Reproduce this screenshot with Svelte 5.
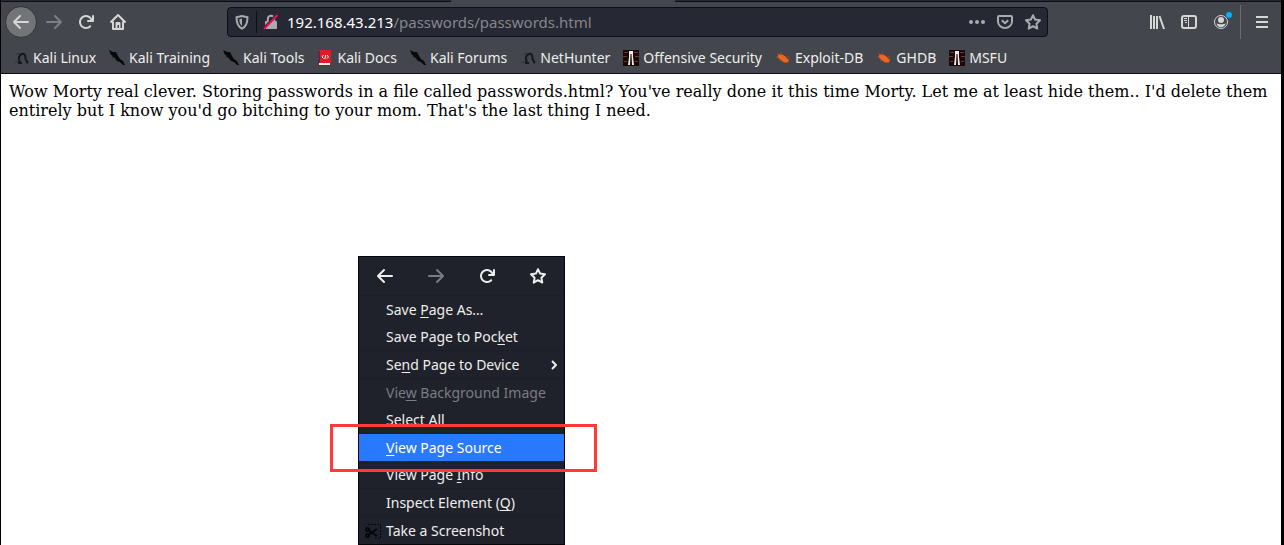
<script lang="ts">
  type Icon = 'dragon' | 'claw' | 'docs' | 'msf' | 'bug'

  const bookmarks: { icon: Icon; label: string }[] = [
    { icon: 'dragon', label: 'Kali Linux' },
    { icon: 'claw', label: 'Kali Training' },
    { icon: 'claw', label: 'Kali Tools' },
    { icon: 'docs', label: 'Kali Docs' },
    { icon: 'claw', label: 'Kali Forums' },
    { icon: 'dragon', label: 'NetHunter' },
    { icon: 'msf', label: 'Offensive Security' },
    { icon: 'bug', label: 'Exploit-DB' },
    { icon: 'bug', label: 'GHDB' },
    { icon: 'msf', label: 'MSFU' },
  ]

  // label is split around its access key
  const groups = [
    [
      { label: ['Save ', 'P', 'age As…'] },
      { label: ['Save Page to Poc', 'k', 'et'] },
    ],
    [{ label: ['Se', 'n', 'd Page to Device'], submenu: true }],
    [
      { label: ['Vie', 'w', ' Background Image'], disabled: true },
      { label: ['Select All', '', ''] },
    ],
    [
      { label: ['', 'V', 'iew Page Source'], active: true },
      { label: ['View Page ', 'I', 'nfo'] },
    ],
    [{ label: ['Inspect Element (', 'Q', ')'] }],
    [{ label: ['Take a Screenshot', '', ''], screenshot: true }],
  ] as {
    label: string[]
    submenu?: boolean
    disabled?: boolean
    active?: boolean
    screenshot?: boolean
  }[][]
</script>

{#snippet back()}
  <svg viewBox="0 0 16 16"><path d="M15 7H3.414l4.293-4.293a1 1 0 0 0-1.414-1.414l-6 6a1 1 0 0 0 0 1.414l6 6a1 1 0 0 0 1.414-1.414L3.414 9H15a1 1 0 0 0 0-2z" /></svg>
{/snippet}

{#snippet forward()}
  <svg viewBox="0 0 16 16"><path d="M1 7h11.586L8.293 2.707a1 1 0 0 1 1.414-1.414l6 6a1 1 0 0 1 0 1.414l-6 6a1 1 0 0 1-1.414-1.414L12.586 9H1a1 1 0 0 1 0-2z" /></svg>
{/snippet}

{#snippet reload()}
  <svg viewBox="0 0 16 16"><path d="M15 1a1 1 0 0 0-1 1v2.418A6.995 6.995 0 1 0 8 15a6.954 6.954 0 0 0 4.95-2.05 1 1 0 0 0-1.414-1.414A5.019 5.019 0 1 1 12.549 6H10a1 1 0 0 0 0 2h5a1 1 0 0 0 1-1V2a1 1 0 0 0-1-1z" /></svg>
{/snippet}

{#snippet star()}
  <svg viewBox="0 0 16 16"><path class="line" d="M8 1.200l2.100 4.400 4.900.7-3.600 3.400.9 4.900L8 12.200l-4.300 2.400.9-4.900L1 6.300l4.900-.7z" /></svg>
{/snippet}

<div class="window">
  <div class="tabs"><div class="tab"></div></div>

  <nav class="toolbar">
    <button class="tool round" aria-label="Back">{@render back()}</button>
    <button class="tool" aria-label="Forward" disabled>{@render forward()}</button>
    <button class="tool" aria-label="Reload">{@render reload()}</button>
    <button class="tool" aria-label="Home">
      <svg viewBox="0 0 16 16">
        <path class="line" d="M.5 8.500L8 1l7.500 7.500M3 7.500V15h10V7.500" />
        <path d="M5.500 15V9a1 1 0 0 1 1-1h3a1 1 0 0 1 1 1v6H9v-4H7.500v4z" />
      </svg>
    </button>

    <div class="urlbar">
      <button class="tracking" aria-label="Tracking protection">
        <svg viewBox="0 0 16 16">
          <path class="line" d="M8 2L2.500 3.200c0 5.200.8 9.100 5.500 11.500 4.700-2.400 5.500-6.300 5.500-11.500z" />
          <path d="M8 4.500l-2.700.8c.1 3 .5 5 2.700 6.700z" />
        </svg>
      </button>
      <button class="security" aria-label="Connection is not secure">
        <svg viewBox="0 0 16 16">
          <path d="M3 7h10a1 1 0 0 1 1 1v6a1 1 0 0 1-1 1H3a1 1 0 0 1-1-1V8a1 1 0 0 1 1-1z" />
          <path class="line" d="M4.800 8V5a3.200 3.200 0 0 1 6.400 0v3" />
          <path class="strike-gap" d="M0 15L13 1" />
          <path class="strike" d="M1 15L14.500 1" />
        </svg>
      </button>
      <div class="address"><span class="host">192.168.43.213</span>/passwords/passwords.html</div>
      <button aria-label="Page actions">
        <svg viewBox="0 0 16 16"><circle cx="2" cy="8" r="2" /><circle cx="8" cy="8" r="2" /><circle cx="14" cy="8" r="2" /></svg>
      </button>
      <button aria-label="Save to Pocket">
        <svg viewBox="0 0 16 16">
          <path class="line" d="M2 2h12a1 1 0 0 1 1 1v4.500a7 6.500 0 0 1-14 0V3a1 1 0 0 1 1-1z" />
          <path class="line" d="M4.800 6.200L8 9.300l3.200-3.100" />
        </svg>
      </button>
      <button aria-label="Bookmark this page">{@render star()}</button>
    </div>

    <button class="tool" aria-label="Library">
      <svg viewBox="0 0 16 16"><path class="line" d="M2 1v14M5 2v13M8 2v13M10.500 2L15 15" /></svg>
    </button>
    <button class="tool" aria-label="Sidebars">
      <svg viewBox="0 0 16 16">
        <rect class="line" x="1" y="2" width="14" height="12" rx="2" />
        <path d="M7 2h1v12H7zM3 4h3v1H3zM3 6h3v1H3zM4 8h2v1H4z" />
      </svg>
    </button>
    <button class="tool account" aria-label="Account">
      <svg viewBox="0 0 16 16">
        <circle class="thin" cx="8" cy="8" r="6.500" />
        <circle cx="8" cy="6" r="3" />
        <path d="M3.500 9.500c2 1 7 1 9 0C12 12 10 13.200 8 13.200S4 12 3.500 9.500z" />
      </svg>
      <span class="badge"></span>
    </button>
    <button class="tool menu-button" aria-label="Open menu">
      <svg viewBox="0 0 16 16"><path d="M2 2h12v2H2zM2 7h12v2H2zM2 12h12v2H2z" /></svg>
    </button>
  </nav>

  <div class="bookmarks">
    {#each bookmarks as { icon, label }}
      <a href="#{label}">
        <svg viewBox="0 0 16 16">
          {#if icon === 'dragon'}
            <path class="faint" d="M1 13c3-2 4-1 5-2M3 5c2-2 4-2 5-1" />
            <path class="dark" d="M6 13c2-2-1-4 0-6s3-4 5-3 1 4 2 6 1 2 2 3M5 13h4" />
          {:else if icon === 'claw'}
            <path class="dark-fill" d="M0 0l4 2 3 0 2 4 2 3 3 2 2 4-2 0-3-3-3-1-3-4-1 1-1-3-1 0z" />
          {:else if icon === 'docs'}
            <path fill="#183e88" d="M1 1h2v13H1z" />
            <path fill="#e01b24" d="M2 0h12v13H2z" />
            <path fill="#eee" d="M2 13h11v2H2z" />
            <path fill="#a80e18" d="M2 1h1v12H2zM1 15h12v1H1z" />
            <path class="code" d="M6.500 5L5 7l1.500 1.500M10 5l1.500 2L10 8.500M8.700 5L7.800 9" />
          {:else if icon === 'msf'}
            <path fill="#1a0809" d="M0 0h16v16H0z" />
            <path fill="#65383a" d="M1 2h4v1H1zM11 2h4v1h-4zM0 6h4v1H0zM12 6h4v1h-4zM1 11h3v1H1zM12 11h3v1h-3z" />
            <path fill="#f0ebe5" d="M6 1h4v6l1 8H9L8.500 4h-1L7 15H5l1-8z" />
          {:else}
            <path class="legs" d="M2 3l4 3M6 2l2 4M1 7h5M12 6l2 1M11 9h4M4 11l3-2M10 11l3 2" />
            <path fill="#f0651a" d="M3 5c3-1 6 0 8 2l3 4c-2 2-5 2-7 0S2 8 3 5z" />
          {/if}
        </svg>
        {label}
      </a>
    {/each}
  </div>

  <main>
    Wow Morty real clever. Storing passwords in a file called passwords.html? You've really done it this time Morty. Let me at least hide them.. I'd delete them entirely but I know you'd go bitching to your mom. That's the last thing I need.
  </main>

  <div class="context-menu">
    <div class="quick">
      <button aria-label="Back">{@render back()}</button>
      <button aria-label="Forward" disabled>{@render forward()}</button>
      <button aria-label="Reload">{@render reload()}</button>
      <button aria-label="Bookmark">{@render star()}</button>
    </div>
    {#each groups as items}
      <div class="group">
        {#each items as item}
          <button class="item" class:active={item.active} disabled={item.disabled}>
            <span class="gutter">
              {#if item.screenshot}
                <svg class="scissors" viewBox="0 0 16 16">
                  <path class="dash" d="M3 1.500h12.500V15H10" />
                  <circle cx="2.500" cy="6.500" r="1.500" />
                  <circle cx="2.500" cy="12.500" r="1.500" />
                  <path d="M4 7.500l8 5.500M4 11.500L12 6" />
                </svg>
              {/if}
            </span>
            <span class="label">{item.label[0]}<u>{item.label[1]}</u>{item.label[2]}</span>
            {#if item.submenu}
              <svg class="chevron" viewBox="0 0 8 8"><path class="line" d="M2 0l4 4-4 4" /></svg>
            {/if}
            {#if item.active}<span class="marker"></span>{/if}
          </button>
        {/each}
      </div>
    {/each}
  </div>
</div>

<style>
  .window {
    box-sizing: border-box;
    position: relative;
    display: flex;
    flex-direction: column;
    min-height: 100vh;
    border-left: 1px solid #000;
    border-right: 3px solid #000;
    background: #fff;
    overflow: hidden;
    font: 14px "Noto Sans", sans-serif;
    color: #eeeeec;
  }

  button {
    display: flex;
    align-items: center;
    justify-content: center;
    margin: 0;
    padding: 0;
    border: 0;
    background: none;
    color: inherit;
    font: inherit;
  }

  svg {
    width: 16px;
    height: 16px;
    flex-shrink: 0;
    fill: currentColor;
    overflow: visible;
  }

  .line {
    fill: none;
    stroke: currentColor;
    stroke-width: 2;
    stroke-linejoin: round;
  }

  .thin {
    fill: none;
    stroke: currentColor;
  }

  .tabs {
    height: 1px;
    background: #262835;
    border-bottom: 1px solid #0d0e12;
  }

  .tab {
    width: 224px;
    height: 2px;
    margin-left: 450px;
    background: #43464d;
  }

  .toolbar {
    display: flex;
    align-items: center;
    height: 40px;
    padding: 0 5px 0 4px;
    background: #43464d;
    color: #d6d6d3;
  }

  .tool {
    width: 32px;
    height: 32px;
  }

  .tool:disabled {
    color: #7d7f83;
  }

  .round {
    box-sizing: border-box;
    margin-right: 1px;
    border: 1px solid #303238;
    border-radius: 50%;
    background: #737477;
  }

  .urlbar {
    box-sizing: border-box;
    display: flex;
    flex: 1;
    align-items: center;
    gap: 12px;
    height: 30px;
    margin: 0 93px;
    padding: 0 6px;
    border: 1px solid #0d0e12;
    border-radius: 4px;
    background: #262833;
    color: #a9aaad;
  }

  .tracking {
    height: 22px;
    padding-right: 6px;
    border-right: 1px solid #0d0e12;
  }

  .security {
    margin-left: -6px;
  }

  .strike-gap {
    stroke: #262833;
    stroke-width: 2;
  }

  .strike {
    stroke: #e2124a;
    stroke-width: 2;
  }

  .address {
    flex: 1;
    margin-left: -4px;
    color: #85868c;
    font-size: 15px;
    white-space: nowrap;
  }

  .host {
    color: #fff;
  }

  .account {
    position: relative;
  }

  .badge {
    position: absolute;
    top: 6px;
    right: 5px;
    width: 6px;
    height: 6px;
    border-radius: 50%;
    background: #00b0ff;
  }

  .menu-button {
    width: 42px;
    height: 34px;
    margin-left: 3px;
    margin-right: -6px;
    border-left: 1px solid #6c6d70;
  }

  .bookmarks {
    display: flex;
    align-items: center;
    gap: 13px;
    height: 31px;
    padding: 0 12px;
    border-bottom: 1px solid #0d0e12;
    background: #43464d;
  }

  .bookmarks a {
    display: flex;
    align-items: center;
    gap: 4px;
    color: inherit;
    text-decoration: none;
    white-space: nowrap;
  }

  .dark {
    fill: none;
    stroke: #17181b;
    stroke-width: 2;
  }

  .faint {
    fill: none;
    stroke: #303238;
  }

  .dark-fill {
    fill: #08090a;
  }

  .code {
    fill: none;
    stroke: #fff;
  }

  .legs {
    fill: none;
    stroke: #8a5238;
  }

  main {
    flex: 1;
    padding: 8px;
    color: #000;
    font: 16px/19px "DejaVu Serif", serif;
  }

  .context-menu {
    position: absolute;
    top: 256px;
    left: 357px;
    width: 205px;
    border: 1px solid #06070b;
    background: #20222b;
  }

  .quick {
    display: flex;
    height: 38px;
  }

  .quick button {
    flex: 1;
  }

  .group {
    border-top: 1px solid #1c1e25;
  }

  .item {
    position: relative;
    width: 100%;
    height: 27px;
    justify-content: flex-start;
    text-align: left;
    white-space: nowrap;
  }

  .quick button:disabled,
  .item:disabled {
    color: #7b7c80;
  }

  .gutter {
    display: flex;
    width: 21px;
    padding-left: 6px;
  }

  .label {
    flex: 1;
  }

  u {
    text-decoration-thickness: 1px;
    text-underline-offset: 2px;
  }

  .active {
    background: #2979ff;
    color: #fff;
  }

  .marker {
    position: absolute;
    z-index: 1;
    inset: -10px -33px -11px -29px;
    border: 3px solid #ff3a37;
  }

  .chevron {
    width: 8px;
    height: 8px;
    margin-right: 6px;
  }

  .scissors {
    fill: none;
    stroke: #050608;
    stroke-width: 2;
  }

  .dash {
    stroke-width: 1;
    stroke-dasharray: 2 1;
  }
</style>
